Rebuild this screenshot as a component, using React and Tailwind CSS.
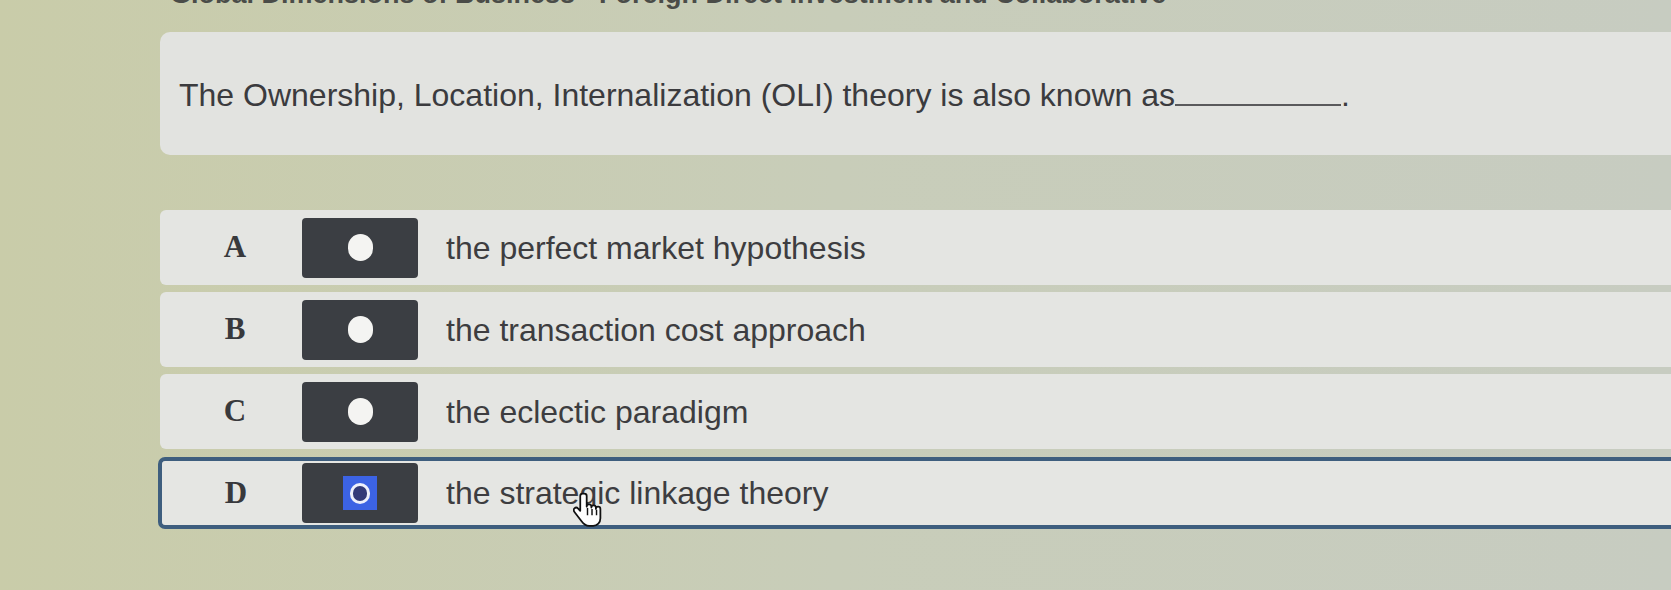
import React from "react";

const options = [
  { letter: "A", text: "the perfect market hypothesis" },
  { letter: "B", text: "the transaction cost approach" },
  { letter: "C", text: "the eclectic paradigm" },
];

/* hand cursor over option D */
function HandCursor() {
  return (
    <svg width="29" height="39" viewBox="0 0 18 24" className="absolute left-[127px] top-[22px]">
      <path
        d="M6 1.5c-.9 0-1.5.7-1.5 1.5v9.2l-1.3-1.4c-.7-.7-1.7-.7-2.3-.1-.6.6-.6 1.5 0 2.2l4.3 5.6c1 1.4 2.5 3 4.8 3h2.5c2.6 0 4.5-2.1 4.5-4.7V11c0-.8-.6-1.4-1.4-1.4-.8 0-1.4.6-1.4 1.4v-.8c0-.8-.6-1.4-1.4-1.4-.8 0-1.4.6-1.4 1.4v-.6c0-.8-.6-1.4-1.4-1.4-.8 0-1.5.6-1.5 1.4V3c0-.8-.6-1.5-1.5-1.5z"
        fill="#ffffff"
        stroke="#111111"
        strokeWidth="1.1"
        strokeLinejoin="round"
      />
      <path d="M9 10.5v4.5M11.8 11v4M14.6 11.5v3.5" stroke="#111111" strokeWidth="0.9" />
    </svg>
  );
}

function OptionRow({ letter, text }) {
  return (
    <div className="flex h-[75px] items-center rounded-l-[6px] bg-[#e4e5e2]">
      <div className="w-[142px] pl-[8px] text-center text-[31px] font-bold text-[#38393c] [font-family:'Liberation_Serif',serif]">
        {letter}
      </div>
      <div className="flex h-[60px] w-[116px] items-center justify-center rounded-[4px] bg-[#3b3e43]">
        <div className="h-[27px] w-[25px] rounded-full bg-[#f4f4f2]" />
      </div>
      <div className="ml-[28px] text-[32px] text-[#3d3d40]">{text}</div>
    </div>
  );
}

export default function App() {
  return (
    <div className="h-[590px] w-full overflow-hidden bg-gradient-to-r from-[#c9cca9] via-[#c8cdb9] to-[#c7ccc1] pl-[160px] [font-family:'Liberation_Sans',Arial,sans-serif]">
      <div className="w-[1560px]">
        <div className="h-[32px] overflow-hidden">
          <h1 className="-mt-[24px] whitespace-nowrap pl-[10px] text-[27px] font-bold leading-[36px] text-[#4a4c48]">
            Global Dimensions of Business - Foreign Direct Investment and Collaborative
          </h1>
        </div>

        <div className="h-[123px] rounded-l-[10px] bg-[#e2e3e0] pl-[19px] pt-[43px]">
          <p className="whitespace-nowrap text-[32px] leading-[40px] text-[#3b3b3e]">
            The Ownership, Location, Internalization (OLI) theory is also known as
            <span className="inline-block h-[2px] w-[166px] bg-[#5a5a5c]" />.
          </p>
        </div>

        <div className="mt-[55px] flex flex-col gap-[7px]">
          {options.map((o) => (
            <OptionRow key={o.letter} letter={o.letter} text={o.text} />
          ))}

          <div className="-ml-[2px] mt-[1px] flex h-[72px] items-center rounded-l-[7px] border-[4px] border-r-0 border-[#3e5e7e] bg-[#e5e6e3]">
            <div className="w-[140px] pl-[8px] text-center text-[31px] font-bold text-[#38393c] [font-family:'Liberation_Serif',serif]">
              D
            </div>
            <div className="flex h-[60px] w-[116px] items-center justify-center rounded-[4px] bg-[#3b3e43]">
              <div className="flex h-[34px] w-[34px] items-center justify-center bg-[#3c63e4]">
                <div className="flex h-[21px] w-[20px] items-center justify-center rounded-full bg-[#eef0fb]">
                  <div className="h-[15px] w-[14px] rounded-full bg-[#333a78]" />
                </div>
              </div>
            </div>
            <div className="relative ml-[28px] text-[32px] text-[#3d3d40]">
              the strategic linkage theory
              <HandCursor />
            </div>
          </div>
        </div>
      </div>
    </div>
  );
}
